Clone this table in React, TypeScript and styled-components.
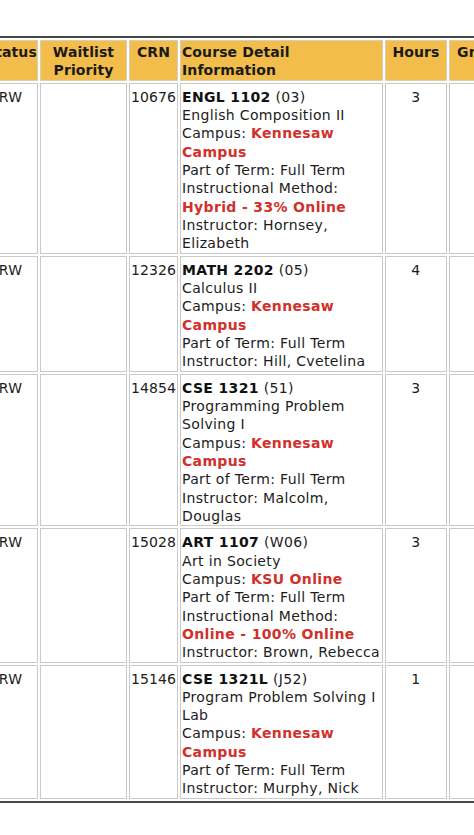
import React from "react";
import styled, { createGlobalStyle } from "styled-components";

const GlobalStyle = createGlobalStyle`
  html, body {
    margin: 0;
    padding: 0;
    background: #ffffff;
    overflow: hidden;
  }
  body {
    font-family: "DejaVu Sans", Verdana, sans-serif;
  }
`;

const Page = styled.div`
  width: 474px;
  height: 835px;
  overflow: hidden;
  padding-top: 36px;
  box-sizing: border-box;
`;

const Table = styled.table`
  margin-left: -19px;
  width: 534px;
  table-layout: fixed;
  border-collapse: separate;
  border-spacing: 2px 2.4px;
  border-top: 2px solid #474747;
  border-bottom: 2px solid #474747;
  font-family: "DejaVu Sans", Verdana, sans-serif;
  font-size: 14px;
  line-height: 18.33px;
  letter-spacing: 0.35px;
  color: #1c1c1c;
`;

const HeadCell = styled.th<{ $w: number; $align?: "left" | "center" }>`
  width: ${(p) => p.$w}px;
  background: #f2bd4a;
  border: 1px solid #d9cfb6;
  padding: 2px 1px 0;
  vertical-align: top;
  text-align: ${(p) => p.$align ?? "center"};
  font-weight: bold;
  letter-spacing: 0.1px;
  color: #1a1a1a;
`;

const Cell = styled.td<{ $align?: "left" | "center" }>`
  border: 1px solid #c9c9c9;
  padding: 4px 1px 0;
  vertical-align: top;
  text-align: ${(p) => p.$align ?? "left"};
  background: #ffffff;
`;

const NumCell = styled(Cell)`
  text-align: right;
  letter-spacing: 0.1px;
`;

const Code = styled.b`
  font-weight: bold;
  color: #111;
`;

const Highlight = styled.b`
  font-weight: bold;
  color: #d2302b;
`;

type Course = {
  status: string;
  crn: string;
  code: string;
  section: string;
  title: string;
  campus: string;
  term: string;
  method?: string;
  instructor: string;
  hours: string;
};

const courses: Course[] = [
  {
    status: "RW",
    crn: "10676",
    code: "ENGL 1102",
    section: "03",
    title: "English Composition II",
    campus: "Kennesaw Campus",
    term: "Full Term",
    method: "Hybrid - 33% Online",
    instructor: "Hornsey, Elizabeth",
    hours: "3",
  },
  {
    status: "RW",
    crn: "12326",
    code: "MATH 2202",
    section: "05",
    title: "Calculus II",
    campus: "Kennesaw Campus",
    term: "Full Term",
    instructor: "Hill, Cvetelina",
    hours: "4",
  },
  {
    status: "RW",
    crn: "14854",
    code: "CSE 1321",
    section: "51",
    title: "Programming Problem Solving I",
    campus: "Kennesaw Campus",
    term: "Full Term",
    instructor: "Malcolm, Douglas",
    hours: "3",
  },
  {
    status: "RW",
    crn: "15028",
    code: "ART 1107",
    section: "W06",
    title: "Art in Society",
    campus: "KSU Online",
    term: "Full Term",
    method: "Online - 100% Online",
    instructor: "Brown, Rebecca",
    hours: "3",
  },
  {
    status: "RW",
    crn: "15146",
    code: "CSE 1321L",
    section: "J52",
    title: "Program Problem Solving I Lab",
    campus: "Kennesaw Campus",
    term: "Full Term",
    instructor: "Murphy, Nick",
    hours: "1",
  },
];

function CourseDetail({ c }: { c: Course }) {
  return (
    <>
      <Code>{c.code}</Code> ({c.section})
      <br />
      {c.title}
      <br />
      Campus: <Highlight>{c.campus}</Highlight>
      <br />
      Part of Term: {c.term}
      {c.method && (
        <>
          <br />
          Instructional Method: <Highlight>{c.method}</Highlight>
        </>
      )}
      <br />
      Instructor: {c.instructor}
    </>
  );
}

export default function App() {
  return (
    <>
      <GlobalStyle />
      <Page>
        <Table>
          <thead>
            <tr>
              <HeadCell $w={51}>Status</HeadCell>
              <HeadCell $w={83}>Waitlist Priority</HeadCell>
              <HeadCell $w={45}>CRN</HeadCell>
              <HeadCell $w={199} $align="left">
                Course Detail Information
              </HeadCell>
              <HeadCell $w={58}>Hours</HeadCell>
              <HeadCell $w={60}>Grade</HeadCell>
            </tr>
          </thead>
          <tbody>
            {courses.map((c) => (
              <tr key={c.crn}>
                <Cell $align="center">{c.status}</Cell>
                <Cell />
                <NumCell>{c.crn}</NumCell>
                <Cell>
                  <CourseDetail c={c} />
                </Cell>
                <Cell $align="center">{c.hours}</Cell>
                <Cell />
              </tr>
            ))}
          </tbody>
        </Table>
      </Page>
    </>
  );
}
